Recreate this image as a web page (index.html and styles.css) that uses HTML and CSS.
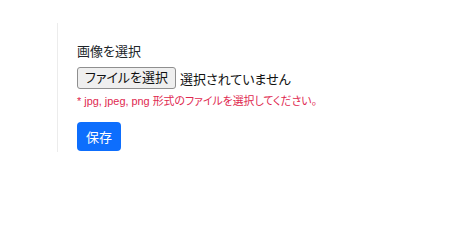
FILE: index.html
```html
<!DOCTYPE html>
<html lang="ja">
<head>
<meta charset="utf-8">
<link rel="stylesheet" href="styles.css">
</head>
<body>
<div class="panel">
  <div class="label">画像を選択</div>
  <div class="file-row">
    <span class="file-btn">ファイルを選択</span>
    <span class="file-status">選択されていません</span>
  </div>
  <div class="hint">* jpg, jpeg, png 形式のファイルを選択してください。</div>
  <button class="save">保存</button>
</div>
</body>
</html>
```
FILE: styles.css
```css
html, body {
  margin: 0;
  background: #ffffff;
}
body {
  font-family: "Liberation Sans", "Noto Sans CJK JP", sans-serif;
  font-feature-settings: "palt";
  color: #212529;
}
.panel {
  margin: 23px 0 0 57px;
  width: 300px;
  height: 129px;
  border-left: 1px solid #ececec;
  padding-left: 19px;
  box-sizing: border-box;
  display: flex;
  flex-direction: column;
  align-items: flex-start;
}
.label {
  margin-top: 20px;
  font-size: 13px;
  line-height: 18px;
}
.file-row {
  margin-top: 6px;
  display: flex;
  align-items: center;
  gap: 4px;
  font-size: 13px;
}
.file-btn {
  display: inline-block;
  height: 22px;
  box-sizing: border-box;
  padding: 0 7px;
  line-height: 20px;
  border: 1px solid #8f8f8f;
  border-radius: 3px;
  background: #efefef;
  color: #111;
}
.file-status {
  color: #111;
}
.hint {
  margin-top: 5px;
  font-size: 10.9px;
  line-height: 14px;
  color: #e0284f;
}
.save {
  margin-top: 14px;
  height: 29px;
  padding: 0 9px;
  border: none;
  border-radius: 4px;
  background: #0d6efd;
  color: #fff;
  font-family: inherit;
  font-feature-settings: "palt";
  font-size: 13px;
}
```
